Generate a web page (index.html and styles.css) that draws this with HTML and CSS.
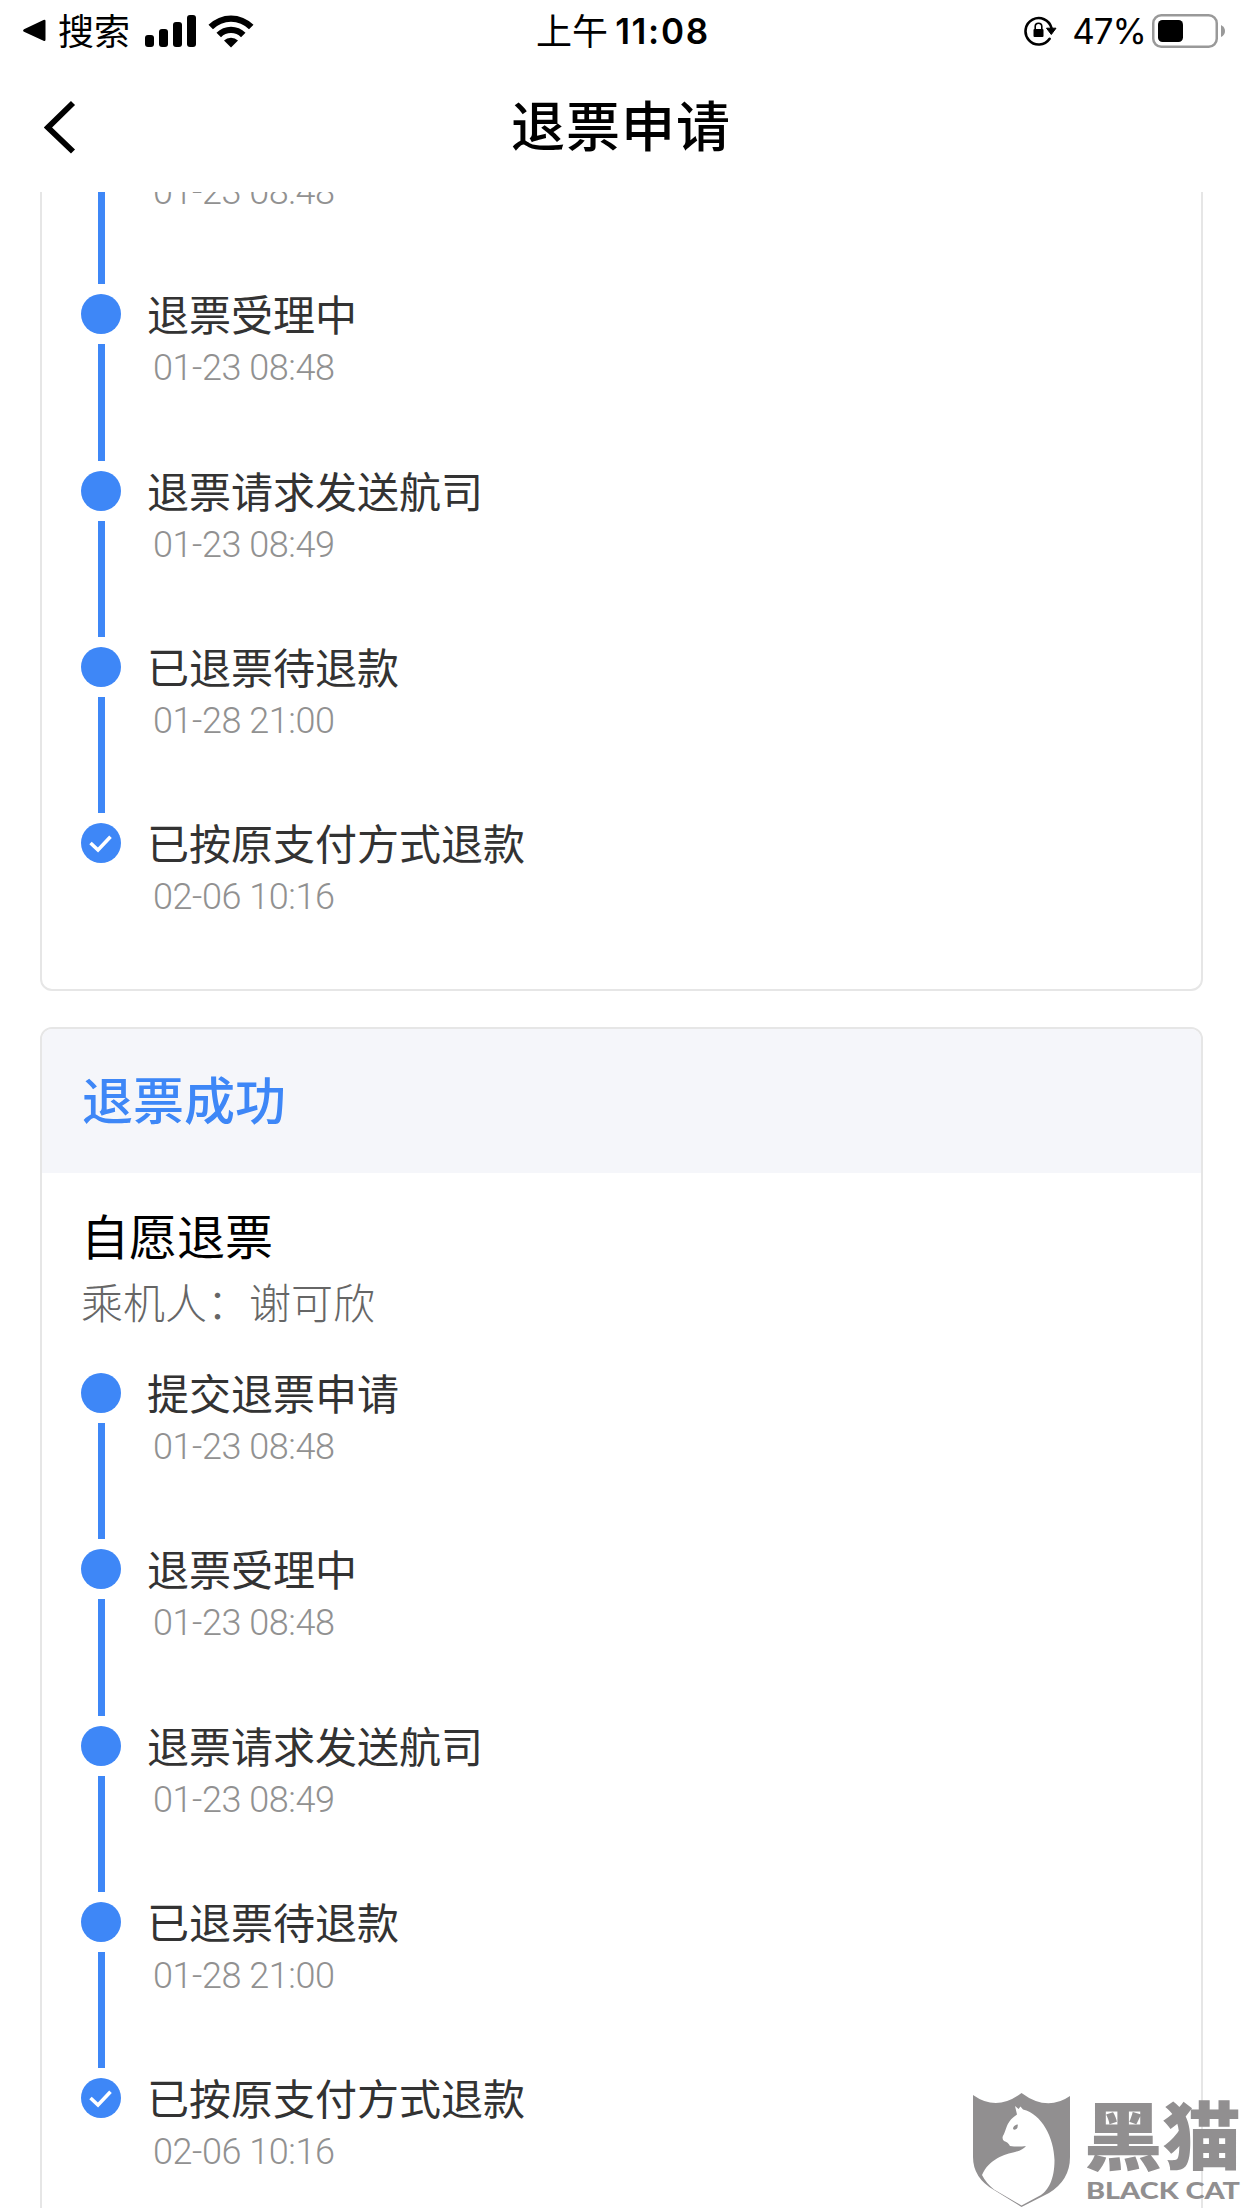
FILE: index.html
```html
<!DOCTYPE html>
<html lang="zh-CN">
<head>
    <meta charset="UTF-8">
    <title>退票申请</title>
    <link rel="stylesheet" href="styles.css">
</head>
<body>
    <div class="status-bar">
        <div class="status-left">
            <svg class="back-app" width="24" height="24" viewBox="0 0 24 24"><path d="M1 10.2 20.5 1Q22.500 0 22.500 2V20.500Q22.500 22.800 20.500 21.800L1 12.800Q-.8 11.500 1 10.200Z"/></svg>
            <span class="back-label">搜索</span>
            <svg class="signal" width="52" height="33" viewBox="0 0 52 33">
                <rect x="0" y="20" width="9" height="12" rx="3"/>
                <rect x="14" y="14" width="9" height="18" rx="3"/>
                <rect x="28" y="7" width="9" height="25" rx="3"/>
                <rect x="42" y="0" width="9" height="32" rx="3"/>
            </svg>
            <svg class="wifi" width="46" height="33" viewBox="0 0 46 33">
                <path d="M0.500 9.800A32 32 0 0 1 45.500 9.800L41 14.300A25.500 25.500 0 0 0 5 14.300Z"/>
                <path d="M8.500 17.800A20.500 20.500 0 0 1 37.500 17.800L33 22.300A14 14 0 0 0 13 22.300Z"/>
                <path d="M16 25.500A10 10 0 0 1 30 25.500L23 32.500Z"/>
            </svg>
        </div>
        <div class="status-time"><span class="ampm">上午</span><span class="clock">11:08</span></div>
        <div class="status-right">
            <svg class="rotation-lock" width="34" height="30" viewBox="0 0 34 30">
                <path d="M25.600 22.800A13.200 13.200 0 1 1 27.500 12" fill="none" stroke="#000" stroke-width="2.600" stroke-linecap="round"/>
                <path d="M22.500 12.200H32L27.300 18.500Z" stroke="#000" stroke-linejoin="round"/>
                <rect x="9.500" y="13" width="10" height="8" rx="1"/>
                <path d="M11.200 13V10.500a3.300 3.300 0 0 1 6.600 0V13" fill="none" stroke="#000" stroke-width="1.600"/>
            </svg>
            <span class="percent">47%</span>
            <svg class="battery" width="74" height="34" viewBox="0 0 74 34">
                <rect x="1.250" y="1.250" width="63.500" height="31.500" rx="8" fill="none" stroke="#999" stroke-width="2.500"/>
                <rect x="6" y="6" width="25" height="22" rx="4.500"/>
                <path d="M69 11q4 2 4 6t-4 6z" fill="#999"/>
            </svg>
        </div>
    </div>

    <header class="nav">
        <svg class="nav-back" width="34" height="54" viewBox="0 0 34 54"><path d="M29 3 4 27.500 29 51.500" fill="none" stroke="#000" stroke-width="5.800"/></svg>
        <h1>退票申请</h1>
    </header>

    <main class="content">
        <section class="card card-first">
            <ul class="steps">
                <li class="step">
                    <div class="marker"><i class="dot"></i><i class="line"></i></div>
                    <div class="info"><p class="label">提交退票申请</p><p class="time">01-23 08:48</p></div>
                </li>
                <li class="step">
                    <div class="marker"><i class="dot"></i><i class="line"></i></div>
                    <div class="info"><p class="label">退票受理中</p><p class="time">01-23 08:48</p></div>
                </li>
                <li class="step">
                    <div class="marker"><i class="dot"></i><i class="line"></i></div>
                    <div class="info"><p class="label">退票请求发送航司</p><p class="time">01-23 08:49</p></div>
                </li>
                <li class="step">
                    <div class="marker"><i class="dot"></i><i class="line"></i></div>
                    <div class="info"><p class="label">已退票待退款</p><p class="time">01-28 21:00</p></div>
                </li>
                <li class="step step-last">
                    <div class="marker"><i class="dot"><svg width="40" height="40" viewBox="0 0 40 40"><path d="M9.500 20 17 27 29.500 13.800" fill="none" stroke="#fff" stroke-width="3.600"/></svg></i></div>
                    <div class="info"><p class="label">已按原支付方式退款</p><p class="time">02-06 10:16</p></div>
                </li>
            </ul>
        </section>

        <section class="card">
            <h2 class="card-title">退票成功</h2>
            <div class="summary">
                <h3>自愿退票</h3>
                <p class="passenger">乘机人：谢可欣</p>
            </div>
            <ul class="steps">
                <li class="step">
                    <div class="marker"><i class="dot"></i><i class="line"></i></div>
                    <div class="info"><p class="label">提交退票申请</p><p class="time">01-23 08:48</p></div>
                </li>
                <li class="step">
                    <div class="marker"><i class="dot"></i><i class="line"></i></div>
                    <div class="info"><p class="label">退票受理中</p><p class="time">01-23 08:48</p></div>
                </li>
                <li class="step">
                    <div class="marker"><i class="dot"></i><i class="line"></i></div>
                    <div class="info"><p class="label">退票请求发送航司</p><p class="time">01-23 08:49</p></div>
                </li>
                <li class="step">
                    <div class="marker"><i class="dot"></i><i class="line"></i></div>
                    <div class="info"><p class="label">已退票待退款</p><p class="time">01-28 21:00</p></div>
                </li>
                <li class="step step-last">
                    <div class="marker"><i class="dot"><svg width="40" height="40" viewBox="0 0 40 40"><path d="M9.500 20 17 27 29.500 13.800" fill="none" stroke="#fff" stroke-width="3.600"/></svg></i></div>
                    <div class="info"><p class="label">已按原支付方式退款</p><p class="time">02-06 10:16</p></div>
                </li>
            </ul>
        </section>
    </main>

    <svg class="watermark" width="270" height="116" viewBox="0 0 270 116">
        <!-- shield -->
        <path d="M1 3Q25 20 49.500 1Q75 20 98 4V65Q98 88 77 101L49.500 115 22 98Q1 86 1 65Z"/>
        <!-- cat -->
        <path class="cat" d="M43 14 46.500 17 48.500 14.500 51 17.500C70 22 82 46 82.500 68C82.500 88 76 98 69 103L49.500 113.500 22 97.500Q14 91 10 83C17 67 33 62 43 60Q51 58 54 54Q46 55 38 54Q36 50 32 49Q29 46 32 42C35 35 35 29 45 22.500Z"/>
        <path d="M41 37q0-4 5-4.500l-1 4q-2 2-4 .5zM44.500 32.500q3 3-1.500 5"/>
        <text class="mark-cn" x="112" y="72" textLength="157" lengthAdjust="spacingAndGlyphs">黑猫</text>
        <text class="mark-en" x="114" y="107" textLength="154" lengthAdjust="spacingAndGlyphs">BLACK CAT</text>
    </svg>
</body>
</html>
```
FILE: styles.css
```css
* {
    box-sizing: border-box;
}

body {
    margin: 0;
    height: 2208px;
    overflow: hidden;
    display: flex;
    flex-direction: column;
    background-color: #fff;
    color: #000;
    font-family: "Noto Sans CJK SC", sans-serif;
}

h1, h2, h3, p, ul {
    margin: 0;
    padding: 0;
    font-weight: normal;
}

svg {
    display: block;
    flex-shrink: 0;
}

/* status bar */
.status-bar {
    display: grid;
    grid-template-columns: 1fr auto 1fr;
    align-items: center;
    height: 62px;
    padding: 0 16px 0 23px;
    font-size: 36px;
    line-height: 62px;
}

.status-left,
.status-right,
.status-time {
    display: flex;
    align-items: center;
}

.back-label,
.ampm {
    height: 62px;
    line-height: 58px;
}

.back-label {
    margin-left: 11px;
}

.signal {
    margin-left: 15px;
}

.wifi {
    margin-left: 11px;
}

.status-right {
    justify-content: flex-end;
}

.status-time {
    margin-right: 3px;
}

.clock {
    margin-left: 7px;
    font-family: Inter, sans-serif;
    font-weight: 600;
    font-size: 35px;
    letter-spacing: 1.7px;
}

.percent {
    margin: 0 6px 0 14px;
    font-family: Inter, sans-serif;
    font-size: 35px;
    letter-spacing: -1px;
}

/* nav */
.nav {
    display: grid;
    grid-template-columns: 120px 1fr 120px;
    align-items: center;
    height: 130px;
}

.nav-back {
    margin-left: 44px;
}

.nav h1 {
    height: 130px;
    text-align: center;
    font-size: 54px;
    font-weight: 500;
    letter-spacing: 1px;
    line-height: 123px;
}

/* cards */
.content {
    flex: 1;
    overflow: hidden;
    padding: 0 39px 0 40px;
}

.card {
    border: 2px solid #e6e6e6;
    border-radius: 12px;
    overflow: hidden;
}

.card-first {
    margin-top: -76px;
    margin-bottom: 36px;
    height: 875px;
}

.card-title {
    height: 144px;
    padding-left: 40px;
    background-color: #f5f6fa;
    color: #3e87f7;
    font-size: 51px;
    font-weight: 500;
    line-height: 138px;
}

.summary {
    height: 200px;
    padding: 31px 0 0 39px;
}

.summary h3 {
    font-size: 48px;
    line-height: 60px;
}

.passenger {
    color: #666;
    font-size: 42px;
    font-weight: 300;
    line-height: 74px;
}

/* timeline */
.steps {
    padding-left: 39px;
    list-style: none;
}

.step {
    display: flex;
    height: 176.25px;
}

.marker {
    width: 40px;
    display: flex;
    flex-direction: column;
    align-items: center;
    gap: 10px;
    padding-bottom: 10px;
}

.dot {
    width: 40px;
    height: 40px;
    border-radius: 50%;
    background-color: #3e87f7;
}

.line {
    flex: 1;
    width: 7px;
    margin-left: 1px;
    background-color: #3e87f7;
}

.info {
    padding-left: 26px;
}

.label {
    color: #333;
    font-size: 42px;
    line-height: 38px;
}

.time {
    padding-left: 6px;
    color: #919191;
    font-family: Roboto, sans-serif;
    font-size: 36px;
    font-weight: 300;
    letter-spacing: -0.45px;
    line-height: 72px;
}

/* watermark */
.watermark {
    position: absolute;
    right: 0;
    bottom: 0;
    fill: #918f90;
}

.watermark .cat {
    fill: #fff;
}

.mark-cn {
    font-size: 74px;
    font-weight: 900;
}

.mark-en {
    font-family: Lato, sans-serif;
    font-size: 22px;
    font-weight: 900;
}
```
